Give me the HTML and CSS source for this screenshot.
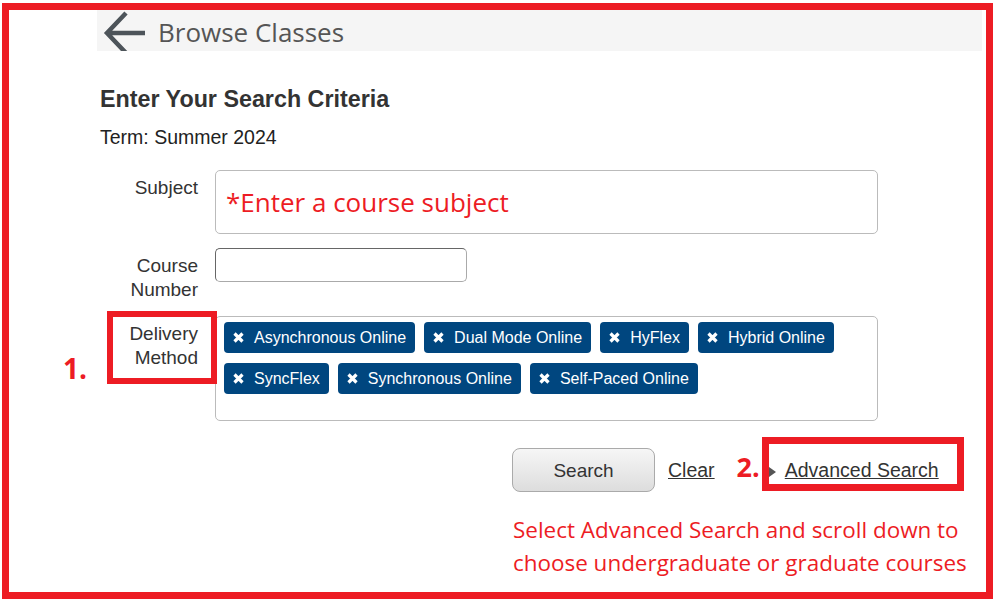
FILE: index.html
```html
<!DOCTYPE html>
<html lang="en">
<head>
<meta charset="utf-8">
<title>Browse Classes</title>
<link rel="stylesheet" href="styles.css">
</head>
<body>
<div class="frame">
  <div class="topbar">
    <svg class="back" width="44" height="41" viewBox="0 0 44 41" aria-hidden="true">
      <path d="M3 23 H42 M23 3 L4 23 L23 43" fill="none" stroke="#4d545a" stroke-width="4.5"/>
    </svg>
    <span class="topbar-title">Browse Classes</span>
  </div>

  <main class="content">
    <h1 class="heading">Enter Your Search Criteria</h1>
    <p class="term">Term: Summer 2024</p>

    <div class="form">
      <label class="lbl" for="subject">Subject</label>
      <input class="inp-subject" id="subject" type="text" placeholder="*Enter a course subject">

      <label class="lbl" for="cnum">Course<br>Number</label>
      <div><input class="inp-num" id="cnum" type="text"></div>

      <div class="lbl lbl-mark">Delivery<br>Method
        <span class="mark-box"></span>
        <span class="mark-num">1.</span>
      </div>
      <div class="chips">
        <span class="chip"><svg class="x" width="11" height="11" viewBox="0 0 11 11"><path d="M1.5 1.5L9.5 9.5M9.5 1.5L1.5 9.5" stroke="#fff" stroke-width="3.2"/></svg>Asynchronous Online</span>
        <span class="chip"><svg class="x" width="11" height="11" viewBox="0 0 11 11"><path d="M1.5 1.5L9.5 9.5M9.5 1.5L1.5 9.5" stroke="#fff" stroke-width="3.2"/></svg>Dual Mode Online</span>
        <span class="chip"><svg class="x" width="11" height="11" viewBox="0 0 11 11"><path d="M1.5 1.5L9.5 9.5M9.5 1.5L1.5 9.5" stroke="#fff" stroke-width="3.2"/></svg>HyFlex</span>
        <span class="chip"><svg class="x" width="11" height="11" viewBox="0 0 11 11"><path d="M1.5 1.5L9.5 9.5M9.5 1.5L1.5 9.5" stroke="#fff" stroke-width="3.2"/></svg>Hybrid Online</span>
        <span class="chip"><svg class="x" width="11" height="11" viewBox="0 0 11 11"><path d="M1.5 1.5L9.5 9.5M9.5 1.5L1.5 9.5" stroke="#fff" stroke-width="3.2"/></svg>SyncFlex</span>
        <span class="chip"><svg class="x" width="11" height="11" viewBox="0 0 11 11"><path d="M1.5 1.5L9.5 9.5M9.5 1.5L1.5 9.5" stroke="#fff" stroke-width="3.2"/></svg>Synchronous Online</span>
        <span class="chip"><svg class="x" width="11" height="11" viewBox="0 0 11 11"><path d="M1.5 1.5L9.5 9.5M9.5 1.5L1.5 9.5" stroke="#fff" stroke-width="3.2"/></svg>Self-Paced Online</span>
      </div>
    </div>

    <div class="actions">
      <button class="btn-search" type="button">Search</button>
      <a class="link clear" href="#">Clear</a>
      <span class="mark-num2">2.</span>
      <span class="adv-box"><span class="tri"></span><a class="link" href="#">Advanced Search</a></span>
    </div>

    <p class="note">Select Advanced Search and scroll down to<br>choose undergraduate or graduate courses</p>
  </main>
</div>
</body>
</html>
```

FILE: styles.css
```css
* { box-sizing: border-box; }
html, body { margin: 0; padding: 0; background: #fff; }
body { font-family: "Liberation Sans", Arial, sans-serif; color: #333; }

.frame {
  margin: 3px 0 0 2px;
  width: 991px;
  height: 596px;
  border: 7px solid #ed1c24;
  overflow: hidden;
}

.topbar {
  margin-left: 88px;
  width: 885px;
  height: 41px;
  background: #f5f5f5;
  display: flex;
  align-items: flex-start;
  overflow: hidden;
}
.back { margin-left: 6px; flex: none; display: block; }
.topbar-title {
  margin-left: 11px;
  margin-top: 2px;
  font-family: "Open Sans", sans-serif;
  font-size: 26px;
  line-height: 41px;
  color: #555;
}

.content { padding-left: 91px; }

.heading {
  margin: 35px 0 0;
  font-size: 23.3px;
  line-height: 26px;
  font-weight: bold;
  color: #333;
}
.term {
  margin: 14px 0 0;
  font-size: 19.5px;
  line-height: 22px;
  color: #222;
}

.form {
  margin-top: 22px;
  display: grid;
  grid-template-columns: 98px 663px;
  column-gap: 17px;
  row-gap: 14px;
}
.lbl {
  text-align: right;
  font-size: 19px;
  line-height: 24px;
  padding-top: 6px;
  color: #333;
}
.inp-subject {
  height: 64px;
  width: 663px;
  border: 1px solid #bbb;
  border-radius: 5px;
  padding: 0 10px;
  font-family: "Open Sans", sans-serif;
  font-size: 26px;
  outline: none;
}
.inp-subject::placeholder { color: #ed1c24; opacity: 1; }
.inp-num {
  display: block;
  width: 252px;
  height: 34px;
  border: 1px solid;
  border-color: #666 #aaa #aaa #666;
  border-radius: 5px;
  outline: none;
}

.lbl-mark { position: relative; }
.mark-box {
  position: absolute;
  left: 7px;
  right: -19px;
  top: -5px;
  height: 73px;
  border: 6px solid #ed1c24;
}
.mark-num {
  position: absolute;
  left: -37px;
  top: 38px;
  font-family: "Open Sans", sans-serif;
  font-weight: bold;
  font-size: 28px;
  line-height: 28px;
  color: #ed1c24;
}

.chips {
  border: 1px solid #bbb;
  border-radius: 5px;
  height: 105px;
  padding: 5px 8px 0;
  display: flex;
  flex-wrap: wrap;
  align-content: flex-start;
  gap: 10px 9px;
}
.chip {
  display: inline-flex;
  align-items: center;
  height: 31px;
  padding: 0 9px 0 9px;
  background: #00467f;
  border-radius: 4px;
  color: #fff;
  font-size: 16px;
}
.x { margin-right: 10px; flex: none; }

.actions {
  margin: 16px 0 0 412px;
  display: flex;
  align-items: baseline;
}
.btn-search {
  width: 143px;
  height: 44px;
  border: 1px solid #aaa;
  border-radius: 8px;
  background: linear-gradient(#f6f6f6, #dddddd);
  font-family: "Liberation Sans", Arial, sans-serif;
  font-size: 19px;
  color: #333;
  padding: 2px 0 0;
}
.link {
  color: #333;
  font-size: 19.5px;
  line-height: 22px;
  text-decoration: underline;
}
.clear { margin-left: 13px; }
.mark-num2 {
  margin-left: 22px;
  font-family: "Open Sans", sans-serif;
  font-weight: bold;
  font-size: 27px;
  color: #ed1c24;
}
.adv-box {
  margin-left: 2px;
  width: 202px;
  height: 54px;
  border: 7px solid #ed1c24;
  padding: 15px 0 0;
  display: inline-flex;
  align-items: baseline;
}
.tri {
  width: 0; height: 0;
  border-top: 5px solid transparent;
  border-bottom: 5px solid transparent;
  border-left: 7px solid #555;
  margin-right: 9px;
  align-self: center;
}

.note {
  margin: 21px 0 0 413px;
  font-family: "Open Sans", sans-serif;
  font-size: 22.45px;
  line-height: 33px;
  color: #ed1c24;
  white-space: nowrap;
}
```
